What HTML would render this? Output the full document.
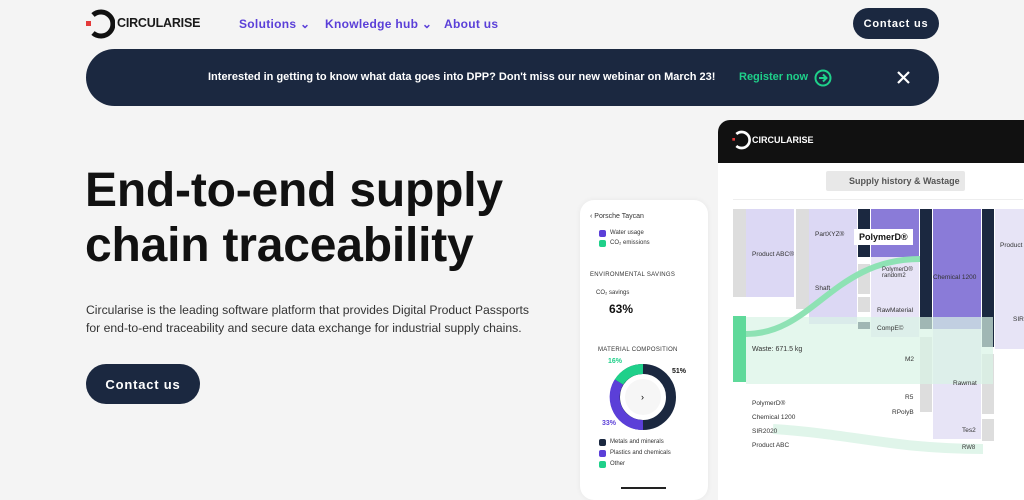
<!DOCTYPE html>
<html><head><meta charset="utf-8"><style>
*{margin:0;padding:0;box-sizing:border-box}
body{width:1024px;height:492px;overflow:hidden;background:#f4f4f4;font-family:"Liberation Sans",sans-serif;position:relative}
.a{position:absolute}
.nav{color:#5a3fd8;font-size:12px;font-weight:bold;letter-spacing:.3px;top:17px}
.btn{background:#1b2840;color:#fff;font-weight:bold;border-radius:30px;display:flex;align-items:center;justify-content:center;letter-spacing:.8px}
.s{font-size:7px;color:#333}
</style></head><body>
<!-- logo -->
<svg class="a" style="left:85px;top:9px" width="30" height="30" viewBox="0 0 30 30"><path d="M8 6 A12 12 0 1 1 8 24" fill="none" stroke="#111" stroke-width="5"/><rect x="1" y="12" width="5" height="5" fill="#e43a3a"/></svg>
<div class="a" style="left:117px;top:16px;font-size:12.5px;font-weight:bold;color:#1a1a1a;letter-spacing:-.2px">CIRCULARISE</div>
<div class="a nav" style="left:239px">Solutions ⌄</div>
<div class="a nav" style="left:325px">Knowledge hub ⌄</div>
<div class="a nav" style="left:444px">About us</div>
<div class="a btn" style="left:853px;top:8px;width:86px;height:31px;font-size:11px">Contact us</div>
<!-- banner -->
<div class="a" style="left:86px;top:49px;width:853px;height:57px;background:#1b2840;border-radius:29px"></div>
<div class="a" style="left:208px;top:71px;color:#fff;font-size:11px;font-weight:bold;letter-spacing:0">Interested in getting to know what data goes into DPP? Don't miss our new webinar on March 23!</div>
<div class="a" style="left:739px;top:71px;color:#1fd08a;font-size:11px;font-weight:bold;letter-spacing:0">Register now</div>
<svg class="a" style="left:814px;top:69px" width="18" height="18" viewBox="0 0 18 18"><circle cx="9" cy="9" r="7.5" fill="none" stroke="#1fd08a" stroke-width="2"/><path d="M5 9h7M9 5.5 12.5 9 9 12.5" fill="none" stroke="#1fd08a" stroke-width="2"/></svg>
<svg class="a" style="left:896px;top:70px" width="15" height="15"><path d="M2 2 13 13M13 2 2 13" stroke="#fff" stroke-width="2.2"/></svg>
<!-- hero -->
<div class="a" style="left:85px;top:163px;font-size:48px;font-weight:bold;color:#111;line-height:55px;letter-spacing:-.2px">End-to-end supply<br>chain traceability</div>
<div class="a" style="left:86px;top:301px;font-size:12.2px;color:#333;line-height:18px">Circularise is the leading software platform that provides Digital Product Passports<br>for end-to-end traceability and secure data exchange for industrial supply chains.</div>
<div class="a btn" style="left:86px;top:364px;width:114px;height:40px;font-size:13px">Contact us</div>
<!-- phone -->
<div class="a" style="left:580px;top:200px;width:128px;height:300px;background:#fff;border-radius:14px;box-shadow:0 0 6px rgba(0,0,0,.06)"></div>
<div class="a s" style="left:590px;top:213px">‹ Porsche Taycan</div>
<div class="a" style="left:599px;top:230px;width:7px;height:7px;background:#5b3fd8;border-radius:2px"></div><div class="a s" style="left:610px;top:230px;font-size:6px">Water usage</div>
<div class="a" style="left:599px;top:240px;width:7px;height:7px;background:#1fd08a;border-radius:2px"></div><div class="a s" style="left:610px;top:240px;font-size:6px">CO₂ emissions</div>
<div class="a s" style="left:590px;top:272px;font-size:6px;letter-spacing:.3px">ENVIRONMENTAL SAVINGS</div>
<div class="a s" style="left:596px;top:290px;font-size:6px">CO₂ savings</div>
<div class="a" style="left:609px;top:302px;font-size:12px;font-weight:bold;color:#111">63%</div>
<div class="a s" style="left:598px;top:347px;font-size:6px;letter-spacing:.3px">MATERIAL COMPOSITION</div>
<svg class="a" style="left:608px;top:362px" width="70" height="70" viewBox="0 0 70 70"><circle cx="35" cy="35" r="28" fill="none" stroke="#1b2840" stroke-width="10"/><path d="M35 63 A28 28 0 0 1 11 20" fill="none" stroke="#5b3fd8" stroke-width="10"/><path d="M11 20 A28 28 0 0 1 35 7" fill="none" stroke="#1fd08a" stroke-width="10"/><circle cx="35" cy="35" r="18" fill="#f6f6f6"/><text x="33" y="38" font-size="9" font-family="Liberation Sans">›</text></svg>
<div class="a" style="left:608px;top:358px;font-size:7px;color:#1fd08a;font-weight:bold">16%</div>
<div class="a" style="left:672px;top:368px;font-size:7px;color:#111;font-weight:bold">51%</div>
<div class="a" style="left:602px;top:420px;font-size:7px;color:#5b3fd8;font-weight:bold">33%</div>
<div class="a" style="left:599px;top:439px;width:7px;height:7px;background:#1b2840;border-radius:2px"></div><div class="a s" style="left:610px;top:439px;font-size:6px">Metals and minerals</div>
<div class="a" style="left:599px;top:450px;width:7px;height:7px;background:#5b3fd8;border-radius:2px"></div><div class="a s" style="left:610px;top:450px;font-size:6px">Plastics and chemicals</div>
<div class="a" style="left:599px;top:461px;width:7px;height:7px;background:#1fd08a;border-radius:2px"></div><div class="a s" style="left:610px;top:461px;font-size:6px">Other</div>
<div class="a" style="left:621px;top:487px;width:45px;height:2px;background:#222"></div>
<!-- dashboard -->
<div class="a" style="left:718px;top:120px;width:310px;height:380px;background:#fff;border-radius:12px 0 0 0;overflow:hidden">
 <div style="height:43px;background:#111"></div>
</div>
<svg class="a" style="left:731px;top:130px" width="20" height="20" viewBox="0 0 30 30"><path d="M8 6 A12 12 0 1 1 8 24" fill="none" stroke="#fff" stroke-width="4"/><rect x="2" y="12" width="4" height="4" fill="#e43a3a"/></svg>
<div class="a" style="left:752px;top:135px;color:#fff;font-size:9px;font-weight:bold">CIRCULARISE</div>
<div class="a" style="left:826px;top:171px;width:139px;height:20px;background:#e8e8e8;border-radius:2px;font-size:9px;font-weight:bold;color:#555;padding:5px 0 0 23px">Supply history &amp; Wastage</div>
<div class="a" style="left:733px;top:199px;width:290px;height:1px;background:#eee"></div>
<svg class="a" style="left:733px;top:209px" width="291" height="250">
<rect x="0" y="0" width="13" height="88" fill="#ddd"/>
<rect x="13" y="0" width="48" height="88" fill="#dcd8f4"/>
<rect x="63" y="0" width="13" height="100" fill="#ddd"/>
<rect x="76" y="0" width="48" height="115" fill="#dcd8f4"/>
<rect x="125" y="0" width="12" height="48" fill="#1b2840"/>
<rect x="125" y="55" width="12" height="30" fill="#ddd"/>
<rect x="125" y="88" width="12" height="15" fill="#ddd"/>
<rect x="125" y="113" width="12" height="7" fill="#1b2840"/>
<rect x="138" y="0" width="48" height="48" fill="#8a7bd8"/>
<rect x="138" y="48" width="48" height="80" fill="#e7e4f6"/>
<rect x="187" y="0" width="12" height="120" fill="#1b2840"/>
<rect x="187" y="128" width="12" height="75" fill="#ddd"/>
<rect x="200" y="0" width="48" height="120" fill="#8a7bd8"/>
<rect x="200" y="120" width="48" height="110" fill="#e7e4f6"/>
<rect x="249" y="0" width="12" height="138" fill="#1b2840"/>
<rect x="249" y="145" width="12" height="60" fill="#ddd"/>
<rect x="249" y="210" width="12" height="22" fill="#ddd"/>
<rect x="262" y="0" width="30" height="140" fill="#e7e4f6"/>
<path d="M13 108 L260 108 L260 175 L13 175Z" fill="#d8f4e6" opacity=".7"/>
<rect x="0" y="107" width="13" height="66" fill="#5fd99a"/>
<path d="M13 125 C80 125 100 50 187 50" fill="none" stroke="#8ee2b4" stroke-width="6"/>
<path d="M40 220 C120 225 160 240 250 240" fill="none" stroke="#e0f5ea" stroke-width="10"/>
</svg>
<div class="a" style="left:854px;top:229px;background:#fff;padding:3px 5px;font-size:9px;font-weight:bold;color:#111">PolymerD®</div>
<div class="a s" style="left:752px;top:251px;font-size:6.5px">Product ABC®</div>
<div class="a s" style="left:815px;top:231px;font-size:6.5px">PartXYZ®</div>
<div class="a s" style="left:815px;top:285px;font-size:6.5px">Shaft</div>
<div class="a s" style="left:882px;top:267px;font-size:6px">PolymerD®<br>random2</div>
<div class="a s" style="left:877px;top:307px;font-size:6.5px">RawMaterial</div>
<div class="a s" style="left:877px;top:325px;font-size:6.5px">CompE©</div>
<div class="a s" style="left:933px;top:274px;font-size:6.5px">Chemical 1200</div>
<div class="a s" style="left:752px;top:346px;font-size:7px">Waste: 671.5 kg</div>
<div class="a s" style="left:905px;top:356px;font-size:6.5px">M2</div>
<div class="a s" style="left:953px;top:380px;font-size:6.5px">Rawmat</div>
<div class="a s" style="left:905px;top:394px;font-size:6.5px">R5</div>
<div class="a s" style="left:892px;top:409px;font-size:6.5px">RPolyB</div>
<div class="a s" style="left:962px;top:427px;font-size:6.5px">Tes2</div>
<div class="a s" style="left:962px;top:445px;font-size:6px">RW8</div>
<div class="a s" style="left:1000px;top:242px;font-size:6.5px">Product</div>
<div class="a s" style="left:1013px;top:316px;font-size:6.5px">SIR</div>
<div class="a s" style="left:752px;top:397px;font-size:6.5px;line-height:14px">PolymerD®<br>Chemical 1200<br>SIR2020<br>Product ABC</div>
</body></html>
